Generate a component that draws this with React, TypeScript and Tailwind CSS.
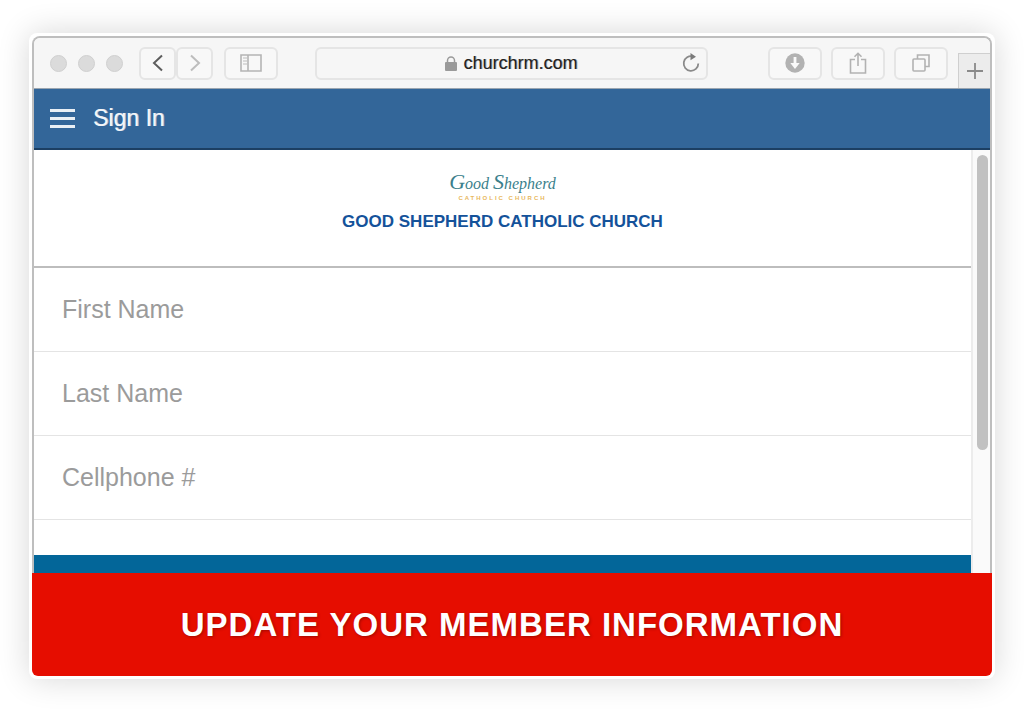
import { ReactNode } from 'react';

interface ToolbarButtonProps {
  label: string;
  className?: string;
  children: ReactNode;
}

const FIELDS = [
  { id: 'first-name', label: 'First Name', type: 'text' },
  { id: 'last-name', label: 'Last Name', type: 'text' },
  { id: 'cellphone', label: 'Cellphone #', type: 'tel' },
];

function ToolbarButton({ label, className = 'w-[54px]', children }: ToolbarButtonProps) {
  return (
    <button
      type="button"
      aria-label={label}
      className={`flex h-[33px] shrink-0 items-center justify-center rounded-md border-2 border-[#e5e5e5] bg-[#f8f8f8] ${className}`}
    >
      {children}
    </button>
  );
}

function BrowserToolbar() {
  return (
    <div className="flex h-[51px] items-center border-b border-[#9aa5b0] bg-[#f6f6f6] pl-4">
      <div className="flex gap-[11px]">
        <span className="size-[17px] rounded-full border border-[#d0d0d0] bg-[#dbdbdb]" />
        <span className="size-[17px] rounded-full border border-[#d0d0d0] bg-[#dbdbdb]" />
        <span className="size-[17px] rounded-full border border-[#d0d0d0] bg-[#dbdbdb]" />
      </div>

      <div className="ml-4 flex">
        <ToolbarButton label="Back" className="w-[37px]">
          <svg className="h-[18px] w-3" viewBox="0 0 12 18" fill="none" stroke="#5e5e5e" strokeWidth="2">
            <path d="M10 1.500L2 9l8 7.500" />
          </svg>
        </ToolbarButton>
        <ToolbarButton label="Forward" className="w-[37px]">
          <svg className="h-[18px] w-3" viewBox="0 0 12 18" fill="none" stroke="#bdbdbd" strokeWidth="2">
            <path d="M2 1.500L10 9l-8 7.500" />
          </svg>
        </ToolbarButton>
      </div>

      <div className="ml-[11px]">
        <ToolbarButton label="Show sidebar">
          <svg className="h-[18px] w-[22px]" viewBox="0 0 22 18" fill="none" stroke="#b4b4b4" strokeWidth="1.600">
            <path d="M1 1h20v16H1zM8 1v16" />
            <path d="M3 4h4M3 7h4M3 10h4" stroke="#d0d0d0" strokeWidth="1.500" />
          </svg>
        </ToolbarButton>
      </div>

      <div className="ml-[37px] flex h-[33px] flex-1 items-center rounded-md border-2 border-[#e5e5e5] bg-[#f6f6f6] pr-1.5 pl-6">
        <div className="flex flex-1 items-center justify-center gap-1.5">
          <svg className="h-[15px] w-3" viewBox="0 0 12 15">
            <rect x="0" y="6" width="12" height="9" rx="1" fill="#9a9a9a" />
            <path d="M2.500 7V4.500a3.500 3.500 0 0 1 7 0V7" fill="none" stroke="#9a9a9a" strokeWidth="1.500" />
          </svg>
          <span className="text-lg text-[#222] [text-shadow:1px_0_0_rgb(0_0_0/0.35)]">churchrm.com</span>
        </div>
        <button type="button" aria-label="Reload">
          <svg className="h-5 w-[18px]" viewBox="0 0 18 20">
            <path d="M11 3.500a7.300 7.300 0 1 0 5.300 7" fill="none" stroke="#8a8a8a" strokeWidth="1.800" />
            <path d="M8.500 0L14 3.700l-5.500 3.500z" fill="#7a7a7a" />
          </svg>
        </button>
      </div>

      <div className="ml-[60px] flex gap-[9px]">
        <ToolbarButton label="Downloads">
          <svg className="size-5" viewBox="0 0 20 20">
            <circle cx="10" cy="10" r="9.700" fill="#b2b2b2" />
            <path d="M10 4v8" stroke="#fafafa" strokeWidth="2.800" />
            <path d="M5.300 10h9.400L10 16z" fill="#fafafa" />
          </svg>
        </ToolbarButton>
        <ToolbarButton label="Share">
          <svg className="h-[22px] w-[18px]" viewBox="0 0 18 22" fill="none" stroke="#b2b2b2" strokeWidth="1.600">
            <path d="M6 7.500H1.500V21h15V7.500H12" />
            <path d="M9 14V1.500M5.500 4.800L9 1.300l3.500 3.500" />
          </svg>
        </ToolbarButton>
        <ToolbarButton label="Show all tabs">
          <svg className="h-[18px] w-[18px]" viewBox="0 0 18 18" fill="none" stroke="#b2b2b2" strokeWidth="1.600">
            <rect x="1" y="5" width="12" height="12" rx="1" />
            <path d="M5.500 5V1H17v11.500h-4" />
          </svg>
        </ToolbarButton>
      </div>

      <button
        type="button"
        aria-label="New tab"
        className="ml-2.5 flex h-[35px] w-8 shrink-0 items-center justify-center self-end border-t border-l border-[#cfcfcf] bg-[#ececec]"
      >
        <svg className="size-4" viewBox="0 0 16 16" stroke="#8a8a8a" strokeWidth="1.800">
          <path d="M8 0v16M0 8h16" />
        </svg>
      </button>
    </div>
  );
}

function ChurchLogo() {
  return (
    <div className="flex flex-col items-center">
      <span className="font-['Liberation_Serif',serif] text-base leading-5 text-[#3b7f8c] italic">
        <span className="text-[22px]">G</span>ood <span className="text-[22px]">S</span>hepherd
      </span>
      <span className="text-[6px] leading-[9px] font-bold tracking-[2px] text-[#e8b75c]">CATHOLIC CHURCH</span>
    </div>
  );
}

function MemberForm() {
  return (
    <form className="min-w-0 flex-1 bg-white">
      <header className="flex h-[118px] flex-col items-center border-b-2 border-[#bdbdbd] pt-[22px]">
        <ChurchLogo />
        <h1 className="mt-[7px] text-[17px] leading-6 font-bold text-[#14529a]">GOOD SHEPHERD CATHOLIC CHURCH</h1>
      </header>

      {FIELDS.map((field) => (
        <div key={field.id} className="border-b border-[#e4e4e4]">
          <input
            id={field.id}
            type={field.type}
            aria-label={field.label}
            placeholder={field.label}
            className="block h-[83px] w-full px-7 text-[25px] text-[#333] outline-none placeholder:text-[#9b9b9b]"
          />
        </div>
      ))}

      {/* Top edge of the submit bar */}
      <div className="mt-[35px] h-[18px] bg-[#036699]" />
    </form>
  );
}

export default function App() {
  return (
    <div className="min-h-screen bg-white px-[29px] py-[33px] font-['Liberation_Sans',Arial,sans-serif]">
      <main className="rounded-lg bg-white p-[3px] shadow-[0_0_32px_rgb(0_0_0/0.16)]">
        <div className="overflow-hidden rounded-t-lg border-2 border-b-0 border-[#bebebe]">
          <BrowserToolbar />

          <nav className="flex h-[61px] items-center gap-[18px] border-b-2 border-[#1c3f63] bg-[#336699] pl-4">
            <button type="button" aria-label="Menu" className="flex w-[25px] flex-col gap-[5px]">
              <span className="h-[3px] bg-[#e9eff5]" />
              <span className="h-[3px] bg-[#e9eff5]" />
              <span className="h-[3px] bg-[#e9eff5]" />
            </button>
            <a href="#sign-in" className="text-[23px] text-[#f4f6f9] [text-shadow:1px_0_0_rgb(255_255_255/0.6)]">
              Sign In
            </a>
          </nav>

          <div className="flex">
            <MemberForm />
            <div className="w-[19px] shrink-0 border-l-2 border-[#ececec] bg-[#fafafa] pt-[5px] pl-1">
              <div className="h-[295px] w-[11px] rounded-full bg-[#c1c1c1]" />
            </div>
          </div>
        </div>

        <a
          href="#update"
          className="flex h-[103px] items-center justify-center rounded-b-md bg-[#e60d00] text-[33px] font-bold tracking-[1px] text-white [text-shadow:1px_1px_3px_rgb(0_0_0/0.3)]"
        >
          UPDATE YOUR MEMBER INFORMATION
        </a>
      </main>
    </div>
  );
}
